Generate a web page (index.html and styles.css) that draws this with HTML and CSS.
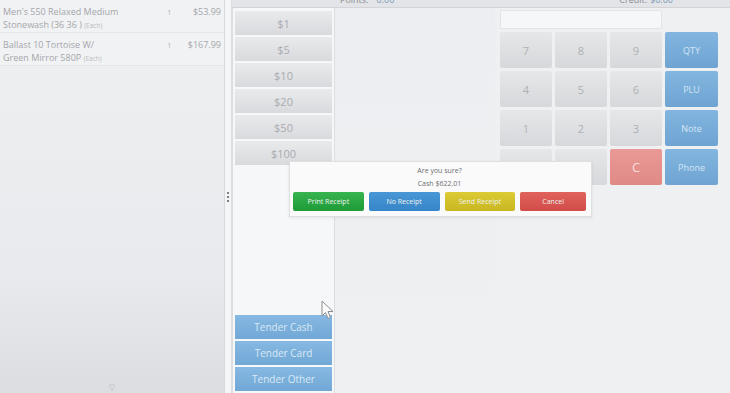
FILE: index.html
```html
<!DOCTYPE html>
<html lang="en">
  <head>
    <meta charset="UTF-8" />
    <meta name="viewport" content="width=device-width, initial-scale=1.0" />
    <title>Register</title>
    <link rel="stylesheet" href="styles.css">
  </head>
  <body>
    <div class="screen">
      <!-- 购物车 -->
      <aside class="cart">
        <div class="cart-row">
          <div class="cart-name">Men's 550 Relaxed Medium<br />Stonewash (36 36 ) <span class="unit">(Each)</span></div>
          <div class="cart-qty">1</div>
          <div class="cart-price">$53.99</div>
        </div>
        <div class="cart-row">
          <div class="cart-name">Ballast 10 Tortoise W/<br />Green Mirror 580P <span class="unit">(Each)</span></div>
          <div class="cart-qty">1</div>
          <div class="cart-price">$167.99</div>
        </div>
        <div class="cart-more">&#9661;</div>
      </aside>

      <div class="splitter"><span></span><span></span><span></span></div>

      <main class="register">
        <header class="totals">
          <div class="total-item total-points"><span class="label">Points:</span><span class="value">0.00</span></div>
          <div class="total-item total-credit"><span class="label">Credit:</span><span class="value">$0.00</span></div>
        </header>
        <div class="work">
          <div class="tender-col">
            <div class="cash-list">
              <button class="btn-cash">$1</button>
              <button class="btn-cash">$5</button>
              <button class="btn-cash">$10</button>
              <button class="btn-cash">$20</button>
              <button class="btn-cash">$50</button>
              <button class="btn-cash">$100</button>
            </div>
            <div class="tender-list">
              <button class="btn-tender">Tender Cash</button>
              <button class="btn-tender">Tender Card</button>
              <button class="btn-tender">Tender Other</button>
            </div>
          </div>
          <div class="middle"></div>
          <div class="keypad-area">
            <div class="entry"></div>
            <div class="keypad">
              <button class="key">7</button>
              <button class="key">8</button>
              <button class="key">9</button>
              <button class="key key-blue">QTY</button>
              <button class="key">4</button>
              <button class="key">5</button>
              <button class="key">6</button>
              <button class="key key-blue">PLU</button>
              <button class="key">1</button>
              <button class="key">2</button>
              <button class="key">3</button>
              <button class="key key-blue">Note</button>
              <button class="key">0</button>
              <button class="key">00</button>
              <button class="key key-red">C</button>
              <button class="key key-blue">Phone</button>
            </div>
          </div>
        </div>
      </main>

      <!-- 确认框 -->
      <div class="dialog">
        <div class="dialog-title">Are you sure?</div>
        <div class="dialog-sub">Cash $622.01</div>
        <div class="dialog-actions">
          <button class="btn-act act-green">Print Receipt</button>
          <button class="btn-act act-blue">No Receipt</button>
          <button class="btn-act act-yellow">Send Receipt</button>
          <button class="btn-act act-red">Cancel</button>
        </div>
      </div>

      <svg class="cursor" width="14" height="20" viewBox="0 0 14 20">
        <path d="M1 1 L1 16 L4.5 12.5 L7 18.5 L9.5 17.5 L7 11.5 L12 11.5 Z" fill="#fbfbfb" stroke="#8a8c90" stroke-width="1" stroke-linejoin="round" />
      </svg>
    </div>
  </body>
</html>
```

FILE: styles.css
```css
* {
  box-sizing: border-box;
}
body {
  margin: 0;
  font-family: "Open Sans", "Liberation Sans", sans-serif;
  background: #eceef1;
}
button {
  font-family: inherit;
  border: none;
  padding: 0;
  cursor: pointer;
}
.screen {
  position: relative;
  width: 730px;
  height: 393px;
  overflow: hidden;
  display: flex;
}

/* cart */
.cart {
  width: 224px;
  display: flex;
  flex-direction: column;
  background: linear-gradient(#eef0f2, #e9eaed 70%, #dcdde0);
}
.cart-row {
  display: flex;
  height: 33px;
  padding: 5px 3px 0 3px;
  background: #f1f2f4;
  border-bottom: 1px solid #e5e6e9;
  color: #a4a6aa;
  font-size: 9px;
  line-height: 13px;
}
.cart-name {
  width: 164px;
  white-space: nowrap;
}
.unit {
  font-size: 6.5px;
  color: #babcbf;
}
.cart-qty {
  width: 12px;
  color: #b8babd;
  font-size: 8px;
}
.cart-price {
  flex: 1;
  text-align: right;
}
.cart-more {
  margin-top: auto;
  text-align: center;
  font-size: 8px;
  line-height: 10px;
  color: #b9bbbe;
  padding-bottom: 1px;
}

/* splitter */
.splitter {
  width: 8px;
  border-left: 1px solid #d8d9dc;
  border-right: 1px solid #dcdde0;
  background: #f4f5f7;
  display: flex;
  flex-direction: column;
  justify-content: center;
  align-items: center;
  gap: 2px;
}
.splitter span {
  width: 2px;
  height: 2px;
  background: #7d7f83;
}

/* register */
.register {
  flex: 1;
  display: flex;
  flex-direction: column;
}
.totals {
  height: 8px;
  overflow: hidden;
  display: flex;
  align-items: flex-end;
  background: #e3e4e7;
  border-bottom: 1px solid #d3d4d7;
  font-size: 9px;
  line-height: 10px;
  color: #8a8c90;
}
.total-item {
  margin-bottom: 2px;
}
.total-points {
  margin-left: 108px;
}
.total-credit {
  margin-left: 225px;
}
.total-item .value {
  color: #7c9bb8;
  margin-left: 8px;
}
.total-credit .value {
  margin-left: 3px;
}
.work {
  flex: 1;
  display: flex;
}

.tender-col {
  width: 103px;
  display: flex;
  flex-direction: column;
  justify-content: space-between;
  padding: 3px 2px 2px 2px;
  background: #f6f7f8;
  border-left: 1px solid #dcdde0;
  border-right: 1px solid #dcdde0;
}
.cash-list,
.tender-list {
  display: flex;
  flex-direction: column;
  gap: 2px;
}
.btn-cash {
  height: 24px;
  background: linear-gradient(#e9eaec, #d9dadd);
  color: #a9abaf;
  font-size: 11px;
}
.btn-tender {
  height: 24px;
  background: linear-gradient(#86b9e2, #72a8d6);
  color: #d9e8f5;
  font-size: 10px;
}

.middle {
  width: 160px;
  background: linear-gradient(#eceef1, #eef0f2);
}

.keypad-area {
  flex: 1;
  padding: 2px 0 0 5px;
  background: #eef0f2;
}
.entry {
  width: 162px;
  height: 19px;
  background: #f6f7f8;
  border: 1px solid #e4e5e8;
  margin-bottom: 3px;
}
.keypad {
  display: grid;
  grid-template-columns: 52px 52px 52px 53px;
  grid-auto-rows: 36px;
  gap: 3px;
}
.key {
  border-radius: 2px;
  background: linear-gradient(#e6e7e9, #d7d8db);
  color: #aeb0b3;
  font-size: 11px;
}
.key-blue {
  background: linear-gradient(#82b6e0, #6fa4d2);
  color: #d4e5f4;
  font-size: 9px;
}
.key-red {
  background: linear-gradient(#ea9a96, #df8985);
  color: #f7dedd;
  font-size: 13px;
}

/* dialog */
.dialog {
  position: absolute;
  left: 289px;
  top: 161px;
  width: 303px;
  height: 56px;
  background: #fafafa;
  border: 1px solid #dedfe1;
  box-shadow: 0 1px 3px rgba(0, 0, 0, 0.08);
  padding: 3px 5px 0 3px;
  text-align: center;
  color: #6d6f72;
  font-size: 7px;
}
.dialog-title {
  line-height: 12px;
}
.dialog-sub {
  line-height: 12px;
  margin-top: 1px;
}
.dialog-actions {
  display: flex;
  gap: 5px;
  margin-top: 2px;
}
.btn-act {
  width: 71px;
  height: 19px;
  border-radius: 2px;
  color: #eef3ee;
  font-size: 7px;
}
.act-green {
  background: linear-gradient(#37b34f, #1d9b37);
}
.act-blue {
  background: linear-gradient(#4a97d6, #3585c8);
}
.act-yellow {
  background: linear-gradient(#dccb34, #c9b722);
}
.act-red {
  width: 66px;
  background: linear-gradient(#e0625d, #d24c48);
}

.cursor {
  position: absolute;
  left: 321px;
  top: 300px;
}
```
